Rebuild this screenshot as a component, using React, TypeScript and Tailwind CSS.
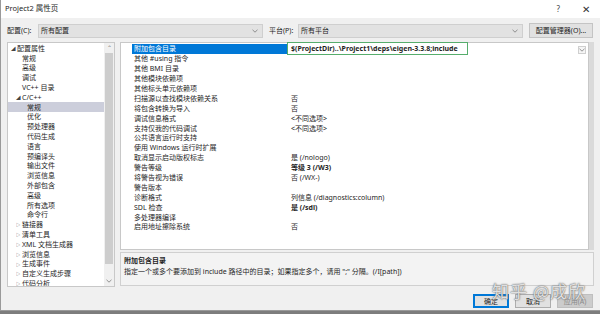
import React from 'react';

interface Prop {
  name: string;
  value?: string;
  bold?: boolean;
}

const props: Prop[] = [
  { name: '附加包含目录' },
  { name: '其他 #using 指令' },
  { name: '其他 BMI 目录' },
  { name: '其他模块依赖项' },
  { name: '其他标头单元依赖项' },
  { name: '扫描源以查找模块依赖关系', value: '否' },
  { name: '将包含转换为导入', value: '否' },
  { name: '调试信息格式', value: '<不同选项>' },
  { name: '支持仅我的代码调试', value: '<不同选项>' },
  { name: '公共语言运行时支持' },
  { name: '使用 Windows 运行时扩展' },
  { name: '取消显示启动版权标志', value: '是 (/nologo)' },
  { name: '警告等级', value: '等级 3 (/W3)', bold: true },
  { name: '将警告视为错误', value: '否 (/WX-)' },
  { name: '警告版本' },
  { name: '诊断格式', value: '列信息 (/diagnostics:column)' },
  { name: 'SDL 检查', value: '是 (/sdl)', bold: true },
  { name: '多处理器编译' },
  { name: '启用地址擦除系统', value: '否' },
];

// indent: 0 top, 1 child, 2 grandchild
const tree: { label: string; indent: number; arrow?: 'open' | 'closed'; selected?: boolean }[] = [
  { label: '配置属性', indent: 0, arrow: 'open' },
  { label: '常规', indent: 1 },
  { label: '高级', indent: 1 },
  { label: '调试', indent: 1 },
  { label: 'VC++ 目录', indent: 1 },
  { label: 'C/C++', indent: 1, arrow: 'open' },
  { label: '常规', indent: 2, selected: true },
  { label: '优化', indent: 2 },
  { label: '预处理器', indent: 2 },
  { label: '代码生成', indent: 2 },
  { label: '语言', indent: 2 },
  { label: '预编译头', indent: 2 },
  { label: '输出文件', indent: 2 },
  { label: '浏览信息', indent: 2 },
  { label: '外部包含', indent: 2 },
  { label: '高级', indent: 2 },
  { label: '所有选项', indent: 2 },
  { label: '命令行', indent: 2 },
  { label: '链接器', indent: 1, arrow: 'closed' },
  { label: '清单工具', indent: 1, arrow: 'closed' },
  { label: 'XML 文档生成器', indent: 1, arrow: 'closed' },
  { label: '浏览信息', indent: 1, arrow: 'closed' },
  { label: '生成事件', indent: 1, arrow: 'closed' },
  { label: '自定义生成步骤', indent: 1, arrow: 'closed' },
  { label: '代码分析', indent: 1, arrow: 'closed' },
];

const font = { fontFamily: '"Noto Sans", "Noto Sans CJK SC", sans-serif' };

const Chevron = () => (
  <svg width="6" height="4" viewBox="0 0 6 4" className="shrink-0">
    <path d="M0.5 0.8 L3 3.2 L5.5 0.8" fill="none" stroke="#7a7a7a" strokeWidth="0.8" />
  </svg>
);

const App: React.FC = () => {
  return (
    <div className="w-[600px] h-[314px] bg-[#7d7d7d] overflow-hidden text-[#1e1e1e]" style={font}>
      <div className="h-[311px] bg-[#f0f0f0] border-l border-b border-[#9a9a9a] flex flex-col">
        {/* title bar */}
        <div className="h-[18px] bg-white flex items-center pl-[4px] pr-[10px] text-[7.5px] leading-none">
          <span>Project2 属性页</span>
          <span className="ml-auto text-[8px] text-[#444]">?</span>
          <span className="ml-[22px] text-[10px] text-[#333]">✕</span>
        </div>

        {/* config row */}
        <div className="mt-[5px] h-[15px] flex items-center pl-[6px] text-[7px] leading-none">
          <span className="w-[31px]">配置(C):</span>
          <div className="w-[225px] h-[14px] bg-[#e2e2e2] border border-[#cfcfcf] flex items-center pl-[2px] pr-[4px]">
            <span>所有配置</span>
            <span className="ml-auto"><Chevron /></span>
          </div>
          <span className="ml-[6px] w-[29px]">平台(P):</span>
          <div className="w-[225px] h-[14px] bg-[#e2e2e2] border border-[#cfcfcf] flex items-center pl-[2px] pr-[4px]">
            <span>所有平台</span>
            <span className="ml-auto"><Chevron /></span>
          </div>
          <div className="ml-[6px] w-[64px] h-[15px] bg-[#e1e1e1] border border-[#c4c4c4] flex items-center justify-center">
            配置管理器(O)...
          </div>
        </div>

        {/* main */}
        <div className="mt-[4px] flex pl-[6px] gap-[5px]">
          {/* tree */}
          <div className="w-[108px] h-[245px] bg-white border border-[#c8c8c8] flex text-[7px] leading-none overflow-hidden">
            <div className="flex-1 pt-[0.5px]">
              {tree.map((t, i) => (
                <div
                  key={i}
                  className={`h-[9.8px] flex items-center ${t.selected ? 'bg-[#cccedb]' : ''}`}
                  style={{ paddingLeft: 3 + t.indent * 5 }}
                >
                  <span className="w-[6px] text-[4.5px] text-[#444]">
                    {t.arrow === 'open' ? '◢' : t.arrow === 'closed' ? '▷' : ''}
                  </span>
                  <span>{t.label}</span>
                </div>
              ))}
            </div>
            <div className="w-[10px] bg-[#f0f0f0] flex flex-col items-center">
              <div className="h-[10px] flex items-center text-[6px] text-[#777]">⌃</div>
              <div className="w-[8px] h-[211px] bg-[#cdcdcd]"></div>
              <div className="flex-1"></div>
              <div className="h-[10px] flex items-center"><Chevron /></div>
            </div>
          </div>

          {/* right side */}
          <div className="w-[474px] flex flex-col gap-[2px]">
            <div className="h-[208px] flex">
              <div className="flex-1 bg-white border border-[#c8c8c8] pl-[11px] pt-[1px] text-[7px] leading-none relative">
                {props.map((p, i) => (
                  <div key={i} className="h-[9.9px] flex items-center">
                    <div
                      className={`w-[156px] h-full flex items-center pl-[2px] ${i === 0 ? 'bg-[#0078d7] text-white' : ''}`}
                    >
                      {p.name}
                    </div>
                    <div className={`pl-[3px] ${p.bold ? 'font-bold' : ''}`}>{p.value}</div>
                  </div>
                ))}
                {/* editing cell */}
                <div className="absolute left-[166px] top-[-1px] w-[181px] h-[13px] bg-white border border-[#56ad6c] flex items-center pl-[3px] font-bold text-[7px]">
                  $(ProjectDir)..\Project1\deps\eigen-3.3.8;include
                </div>
                <div className="absolute right-[2px] top-[3px] w-[8px] h-[8px] border border-[#cfcfcf] bg-[#f5f5f5] flex items-center justify-center">
                  <Chevron />
                </div>
              </div>
              <div className="w-[5px] bg-[#dadada]"></div>
            </div>
            <div className="h-[34px] w-[474px] bg-[#f3f3f3] border border-[#d0d0d0] px-[3px] pt-[4px] text-[7px] leading-none">
              <div className="font-bold">附加包含目录</div>
              <div className="mt-[4px]">
                指定一个或多个要添加到 include 路径中的目录；如果指定多个，请用 ";" 分隔。(/I[path])
              </div>
            </div>
          </div>
        </div>

        {/* buttons */}
        <div className="mt-[7px] flex justify-end pr-[7px] gap-[6px] text-[7px] leading-none relative">
          <div className="w-[36px] h-[14px] bg-[#e1e1e1] border border-[#0078d7] shadow-[inset_0_0_0_1px_#0078d7] flex items-center justify-center">
            确定
          </div>
          <div className="w-[36px] h-[14px] bg-[#e1e1e1] border border-[#adadad] flex items-center justify-center">
            取消
          </div>
          <div className="w-[36px] h-[14px] bg-[#cccccc] border border-[#bfbfbf] text-[#8a8a8a] flex items-center justify-center">
            应用(A)
          </div>
          {/* watermark */}
          <div
            className="absolute right-[14px] top-[-12px] text-[17px] leading-none text-white/80 tracking-[1px] [text-shadow:0_0_1px_#555,0_0_2px_#777]"
            style={{ fontFamily: '"Noto Sans CJK SC", sans-serif' }}
          >
            知乎 @成欣
          </div>
        </div>
      </div>
    </div>
  );
};

export default App;
